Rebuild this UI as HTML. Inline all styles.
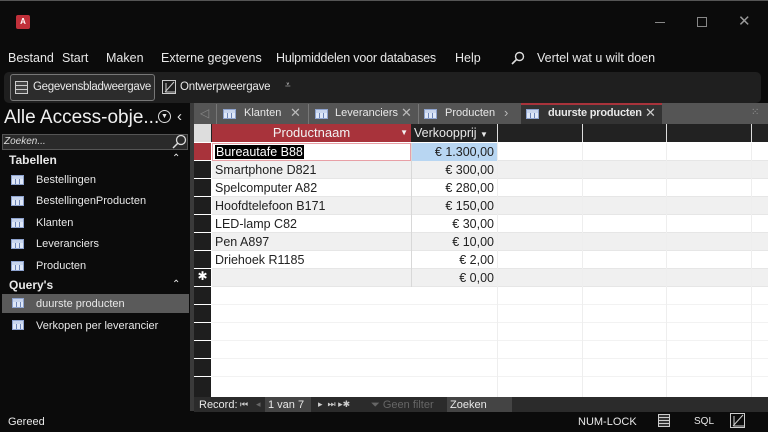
<!DOCTYPE html>
<html><head><meta charset="utf-8"><style>
*{margin:0;padding:0;box-sizing:border-box}
body{width:768px;height:432px;background:#0b0b0b;font-family:"Liberation Sans",sans-serif;color:#e8e8e8;position:relative;overflow:hidden;font-size:12px}
.a{position:absolute;white-space:nowrap}
.tbl{display:inline-block;width:13px;height:10px;background:linear-gradient(#c9d6ee,#c9d6ee) 0 0/100% 3px no-repeat,repeating-linear-gradient(90deg,#dfe8f8 0 3px,#6e86b8 3px 4px);border:1px solid #8ea3cf}
.row{position:absolute;left:212px;width:556px;height:18px;border-bottom:1px solid #e6e6e6;font-size:12.5px;color:#222}
.sel{position:absolute;left:194px;width:17px;height:17px;background:#1e1e1e}
.m{top:51px;font-size:12.5px}
</style></head><body>
<div class="a" style="left:0;top:0;width:768px;height:1px;background:#555"></div>
<div class="a" style="left:16px;top:15px;width:14px;height:14px;background:#c0303a;border-radius:2px;color:#fff;font-size:8px;font-weight:bold;text-align:center;line-height:14px">A</div>
<div class="a" style="left:655px;top:22px;width:10px;height:1px;background:#888"></div>
<div class="a" style="left:697px;top:17px;width:10px;height:10px;border:1px solid #888"></div>
<div class="a" style="left:738px;top:12px;color:#999;font-size:15px">✕</div>
<div class="a m" style="left:8px">Bestand</div>
<div class="a m" style="left:62px">Start</div>
<div class="a m" style="left:106px">Maken</div>
<div class="a m" style="left:161px">Externe gegevens</div>
<div class="a m" style="left:276px;letter-spacing:-0.2px">Hulpmiddelen voor databases</div>
<div class="a m" style="left:455px">Help</div>
<svg class="a" style="left:511px;top:51px" width="14" height="14"><circle cx="8.5" cy="5.5" r="4" fill="none" stroke="#ddd" stroke-width="1.4"/><line x1="5.5" y1="8.5" x2="1" y2="13" stroke="#ddd" stroke-width="1.6"/></svg>
<div class="a m" style="left:537px">Vertel wat u wilt doen</div>
<div class="a" style="left:4px;top:72px;width:757px;height:31px;background:#1f1f1f;border-radius:5px"></div>
<div class="a" style="left:10px;top:74px;width:145px;height:27px;border:1px solid #777;border-radius:3px;background:#2c2c2c"></div>
<div class="a" style="left:15px;top:81px;width:13px;height:13px;border:1px solid #ccc;background:repeating-linear-gradient(#444 0 3px,#ccc 3px 4px)"></div>
<div class="a" style="left:33px;top:81px;font-size:11.5px;letter-spacing:-0.3px">Gegevensbladweergave</div>
<svg class="a" style="left:162px;top:80px" width="14" height="14"><rect x="0.5" y="0.5" width="13" height="13" fill="none" stroke="#ccc"/><path d="M3 12 L12 2 M4 3v9h9" stroke="#ccc" fill="none"/></svg>
<div class="a" style="left:180px;top:81px;font-size:11.5px;letter-spacing:-0.2px">Ontwerpweergave</div>
<div class="a" style="left:285px;top:80px;font-size:10px;color:#ccc">⩡</div>
<div class="a" style="left:4px;top:107px;font-size:19px;color:#f0f0f0">Alle Access-obje...</div>
<div class="a" style="left:158px;top:110px;width:13px;height:13px;border:1px solid #ddd;border-radius:50%;font-size:7px;text-align:center;line-height:11px">▼</div>
<div class="a" style="left:177px;top:108px;font-size:15px">‹</div>
<div class="a" style="left:2px;top:134px;width:186px;height:16px;background:#2a2a2a;border:1px solid #555"></div>
<div class="a" style="left:4px;top:136px;font-size:10px;font-style:italic;color:#ddd">Zoeken...</div>
<svg class="a" style="left:172px;top:134px" width="15" height="15"><circle cx="9" cy="6" r="4.5" fill="none" stroke="#ddd" stroke-width="1.3"/><line x1="6" y1="9" x2="1" y2="14" stroke="#ddd" stroke-width="1.5"/></svg>
<div class="a" style="left:9px;top:153px;font-size:12px;font-weight:bold">Tabellen</div>
<div class="a" style="left:172px;top:153px;font-size:10px">⌃</div>
<div class="a tbl" style="left:11px;top:175px"></div><div class="a" style="left:36px;top:174px;font-size:11px">Bestellingen</div>
<div class="a tbl" style="left:11px;top:196px"></div><div class="a" style="left:36px;top:195px;font-size:11px">BestellingenProducten</div>
<div class="a tbl" style="left:11px;top:218px"></div><div class="a" style="left:36px;top:217px;font-size:11px">Klanten</div>
<div class="a tbl" style="left:11px;top:239px"></div><div class="a" style="left:36px;top:238px;font-size:11px">Leveranciers</div>
<div class="a tbl" style="left:11px;top:261px"></div><div class="a" style="left:36px;top:260px;font-size:11px">Producten</div>
<div class="a" style="left:9px;top:278px;font-size:12px;font-weight:bold">Query's</div>
<div class="a" style="left:172px;top:279px;font-size:10px">⌃</div>
<div class="a" style="left:2px;top:294px;width:187px;height:19px;background:#5a5a5a"></div>
<div class="a tbl" style="left:12px;top:298px;width:12px"></div><div class="a" style="left:36px;top:298px;font-size:11px">duurste producten</div>
<div class="a tbl" style="left:12px;top:320px;width:12px"></div><div class="a" style="left:36px;top:320px;font-size:11px">Verkopen per leverancier</div>
<div class="a" style="left:190px;top:103px;width:4px;height:308px;background:#3a3a3a"></div>
<div class="a" style="left:194px;top:103px;width:574px;height:21px;background:#555"></div>
<div class="a" style="left:200px;top:106px;color:#888;font-size:12px">◁</div>
<div class="a" style="left:216px;top:104px;width:1px;height:20px;background:#777"></div>
<div class="a tbl" style="left:223px;top:109px"></div><div class="a" style="left:244px;top:107px;font-size:11px">Klanten</div><div class="a" style="left:290px;top:105px;font-size:13px;color:#bbb">✕</div>
<div class="a" style="left:308px;top:104px;width:1px;height:20px;background:#777"></div>
<div class="a tbl" style="left:315px;top:109px"></div><div class="a" style="left:335px;top:107px;font-size:11px">Leveranciers</div><div class="a" style="left:401px;top:105px;font-size:13px;color:#bbb">✕</div>
<div class="a" style="left:418px;top:104px;width:1px;height:20px;background:#777"></div>
<div class="a tbl" style="left:424px;top:109px"></div><div class="a" style="left:445px;top:107px;font-size:11px">Producten</div><div class="a" style="left:504px;top:105px;font-size:13px;color:#bbb">›</div>
<div class="a" style="left:521px;top:103px;width:141px;height:21px;background:#333;border-top:2px solid #a8333b"></div>
<div class="a tbl" style="left:526px;top:109px"></div><div class="a" style="left:548px;top:107px;font-size:11px;font-weight:bold;letter-spacing:-0.2px">duurste producten</div><div class="a" style="left:645px;top:105px;font-size:13px;color:#ccc">✕</div>
<div class="a" style="left:751px;top:107px;font-size:10px;color:#999">⁙</div>
<div class="a" style="left:194px;top:124px;width:574px;height:273px;background:#fff"></div>
<div class="a" style="left:194px;top:124px;width:574px;height:18px;background:#222"></div>
<div class="a" style="left:194px;top:124px;width:17px;height:18px;background:#ddd"></div>
<div class="a" style="left:212px;top:124px;width:199px;height:18px;background:#a8333b;color:#f2f2f2;font-size:13px;text-align:center;line-height:18px">Productnaam<span style="position:absolute;right:3px;font-size:8px">▼</span></div>
<div class="a" style="left:412px;top:124px;width:85px;height:18px;font-size:12.5px;line-height:18px;padding-left:2px">Verkoopprij <span style="font-size:8px">▼</span></div>
<div class="a" style="left:497px;top:124px;width:1px;height:18px;background:#ddd"></div>
<div class="a" style="left:582px;top:124px;width:1px;height:18px;background:#ddd"></div>
<div class="a" style="left:666px;top:124px;width:1px;height:18px;background:#ddd"></div>
<div class="a" style="left:751px;top:124px;width:1px;height:18px;background:#ddd"></div>
<div class="row" style="top:143px;background:#fff"></div>
<div class="a" style="left:212px;top:143px;width:199px;height:18px;border:1px solid #e8a0a6"></div>
<div class="a" style="left:215px;top:145px;background:#000;color:#fff;font-size:12.5px;padding:0 1px">Bureautafe B88</div>
<div class="a" style="left:412px;top:143px;width:85px;height:18px;background:#b8d6f2;color:#222;font-size:12.5px;text-align:right;padding-right:3px;line-height:18px">€ 1.300,00</div>
<div class="row" style="top:161px;background:#f0f0f0"><span class="a" style="left:3px;top:2px">Smartphone D821</span><span class="a" style="left:200px;width:85px;text-align:right;top:2px;padding-right:3px">€ 300,00</span></div>
<div class="row" style="top:179px;background:#fff"><span class="a" style="left:3px;top:2px">Spelcomputer A82</span><span class="a" style="left:200px;width:85px;text-align:right;top:2px;padding-right:3px">€ 280,00</span></div>
<div class="row" style="top:197px;background:#f0f0f0"><span class="a" style="left:3px;top:2px">Hoofdtelefoon B171</span><span class="a" style="left:200px;width:85px;text-align:right;top:2px;padding-right:3px">€ 150,00</span></div>
<div class="row" style="top:215px;background:#fff"><span class="a" style="left:3px;top:2px">LED-lamp C82</span><span class="a" style="left:200px;width:85px;text-align:right;top:2px;padding-right:3px">€ 30,00</span></div>
<div class="row" style="top:233px;background:#f0f0f0"><span class="a" style="left:3px;top:2px">Pen A897</span><span class="a" style="left:200px;width:85px;text-align:right;top:2px;padding-right:3px">€ 10,00</span></div>
<div class="row" style="top:251px;background:#fff"><span class="a" style="left:3px;top:2px">Driehoek R1185</span><span class="a" style="left:200px;width:85px;text-align:right;top:2px;padding-right:3px">€ 2,00</span></div>
<div class="row" style="top:269px;background:#f0f0f0"><span class="a" style="left:200px;width:85px;text-align:right;top:2px;padding-right:3px">€ 0,00</span></div>
<div class="row" style="top:287px;background:#fff;border-color:#f2f2f2"></div>
<div class="row" style="top:305px;background:#fff;border-color:#f2f2f2"></div>
<div class="row" style="top:323px;background:#fff;border-color:#f2f2f2"></div>
<div class="row" style="top:341px;background:#fff;border-color:#f2f2f2"></div>
<div class="row" style="top:359px;background:#fff;border-color:#f2f2f2"></div>
<div class="a" style="left:411px;top:143px;width:1px;height:144px;background:#d8d8d8"></div>
<div class="a" style="left:497px;top:143px;width:1px;height:254px;background:#eee"></div>
<div class="a" style="left:582px;top:143px;width:1px;height:254px;background:#eee"></div>
<div class="a" style="left:666px;top:143px;width:1px;height:254px;background:#eee"></div>
<div class="a" style="left:751px;top:143px;width:1px;height:254px;background:#eee"></div>
<div class="sel" style="top:143px;background:#a8333b"></div>
<div class="sel" style="top:161px"></div><div class="sel" style="top:179px"></div><div class="sel" style="top:197px"></div><div class="sel" style="top:215px"></div><div class="sel" style="top:233px"></div><div class="sel" style="top:251px"></div>
<div class="sel" style="top:269px;color:#fff;font-size:12px;text-align:center">✱</div>
<div class="sel" style="top:287px"></div><div class="sel" style="top:305px"></div><div class="sel" style="top:323px"></div><div class="sel" style="top:341px"></div><div class="sel" style="top:359px"></div><div class="sel" style="top:377px;height:20px"></div>
<div class="a" style="left:194px;top:397px;width:574px;height:15px;background:#2b2b2b"></div>
<div class="a" style="left:199px;top:399px;font-size:11px">Record:</div>
<div class="a" style="left:240px;top:399px;font-size:9px;color:#ccc">⏮</div>
<div class="a" style="left:256px;top:399px;font-size:9px;color:#666">◂</div>
<div class="a" style="left:265px;top:397px;width:46px;height:15px;background:#444"></div>
<div class="a" style="left:268px;top:399px;font-size:11px">1 van 7</div>
<div class="a" style="left:318px;top:399px;font-size:9px;color:#ccc">▸ &nbsp;⏭ ▸✱</div>
<div class="a" style="left:371px;top:399px;font-size:11px;color:#666">⏷ Geen filter</div>
<div class="a" style="left:447px;top:397px;width:65px;height:15px;background:#444"></div>
<div class="a" style="left:450px;top:399px;font-size:11px">Zoeken</div>
<div class="a" style="left:8px;top:416px;font-size:11px">Gereed</div>
<div class="a" style="left:578px;top:416px;font-size:11px">NUM-LOCK</div>
<div class="a" style="left:658px;top:414px;width:12px;height:13px;border:1px solid #ccc;background:repeating-linear-gradient(#333 0 2px,#ccc 2px 3px)"></div>
<div class="a" style="left:694px;top:416px;font-size:10px">SQL</div>
<svg class="a" style="left:730px;top:413px" width="15" height="15"><rect x="0.5" y="0.5" width="14" height="14" fill="none" stroke="#ccc"/><path d="M3 13 L13 2 M4 3v10h10" stroke="#ccc" fill="none"/></svg>
</body></html>
